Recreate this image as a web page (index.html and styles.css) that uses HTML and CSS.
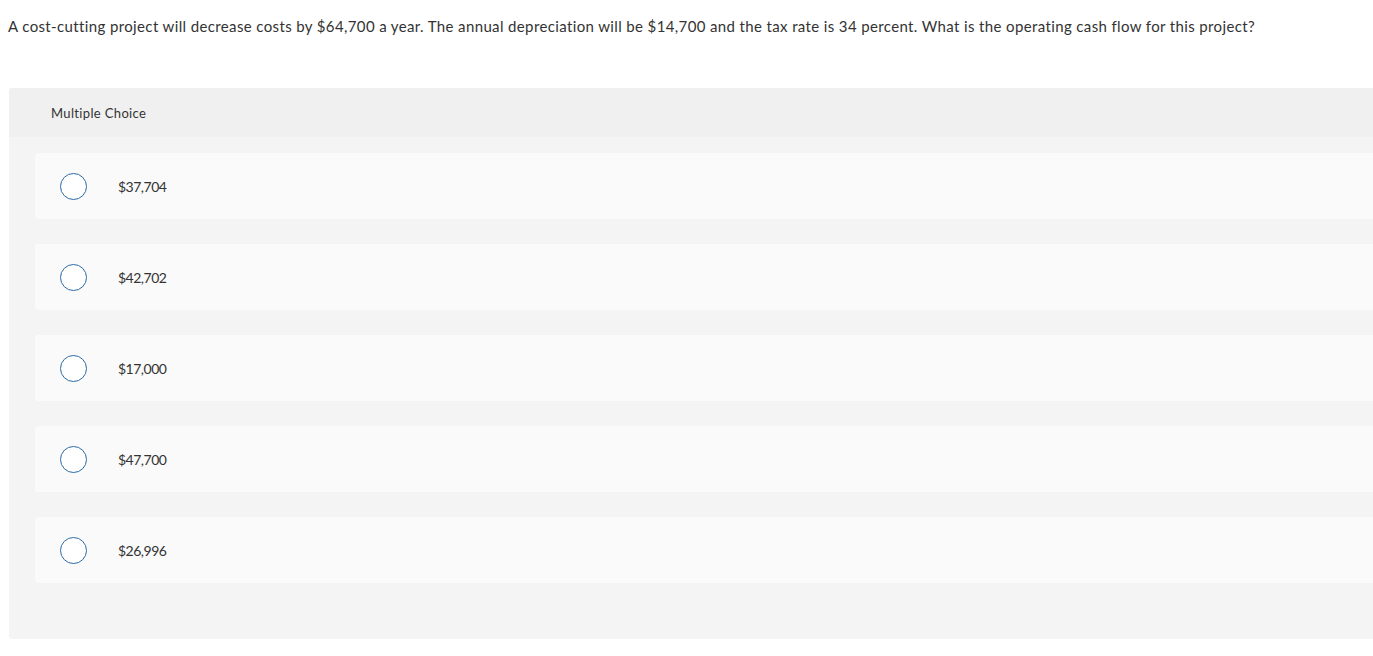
FILE: index.html
```html
<!DOCTYPE html>
<html>
<head>
<meta charset="utf-8">
<link rel="stylesheet" href="styles.css">
</head>
<body>
<p class="question">A cost-cutting project will decrease costs by $64,700 a year. The annual depreciation will be $14,700 and the tax rate is 34 percent. What is the operating cash flow for this project?</p>
<div class="panel">
  <div class="panel-head">Multiple Choice</div>
  <div class="choices">
    <div class="choice"><span class="radio"></span><span class="label">$37,704</span></div>
    <div class="choice"><span class="radio"></span><span class="label">$42,702</span></div>
    <div class="choice"><span class="radio"></span><span class="label">$17,000</span></div>
    <div class="choice"><span class="radio"></span><span class="label">$47,700</span></div>
    <div class="choice"><span class="radio"></span><span class="label">$26,996</span></div>
  </div>
</div>
</body>
</html>
```
FILE: styles.css
```css
html, body {
  margin: 0;
  padding: 0;
  overflow: hidden;
  background: #fff;
}
body {
  font-family: Lato, "Open Sans", Arial, sans-serif;
  color: #333;
}
.question {
  margin: 0;
  padding: 16px 0 0 8px;
  font-size: 15px;
  line-height: 20px;
  letter-spacing: 0.37px;
  color: #333;
  white-space: nowrap;
}
.panel {
  margin: 52px -20px 0 9px;
  background: #f4f4f4;
  border-radius: 3px;
  padding-bottom: 56px;
}
.panel-head {
  background: #f0f0f0;
  height: 49px;
  padding-left: 42px;
  display: flex;
  align-items: center;
  font-size: 13px;
  letter-spacing: 0.35px;
  color: #333;
  border-radius: 3px 3px 0 0;
}
.choices {
  padding: 16px 0 0 26px;
  display: flex;
  flex-direction: column;
  gap: 25px;
}
.choice {
  background: #fafafa;
  height: 66px;
  border-radius: 3px;
  display: flex;
  align-items: center;
  padding-left: 25px;
}
.radio {
  border: 1px solid #2c6aa5;
  border-radius: 50%;
  background: #fff;
  box-sizing: border-box;
  width: 27px;
  height: 27px;
  flex: none;
}
.label {
  margin-left: 31px;
  font-size: 14px;
  letter-spacing: -0.5px;
  color: #333;
}
```
